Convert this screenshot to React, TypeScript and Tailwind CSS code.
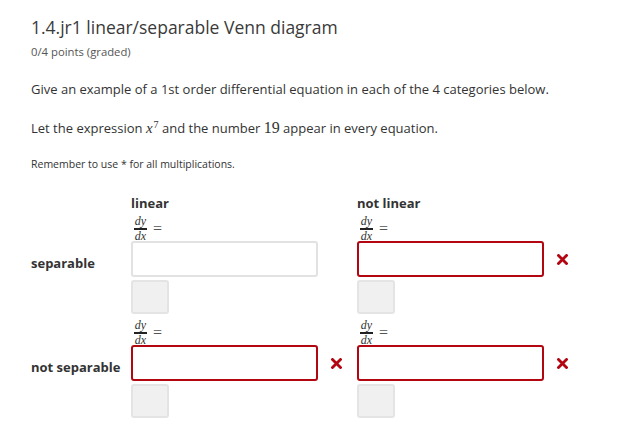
import React from 'react';

const RED = '#b20610';

function Frac() {
  return (
    <div className="flex h-[29px] items-center pl-[3px] pt-[4px]">
      <div className="flex flex-col items-center [font-family:'Liberation_Serif',serif] text-[12px] italic leading-[11px] text-[#333]">
        <span>dy</span>
        <span className="my-[1px] h-[2px] w-[13px] bg-[#222]" />
        <span>dx</span>
      </div>
      <span className="ml-[6px] [font-family:'Liberation_Serif',serif] text-[16px] leading-none text-[#555]">=</span>
    </div>
  );
}

function Cross() {
  return (
    <svg width="11" height="11" viewBox="0 0 11 11" className="block">
      <path d="M1.5 1.5 L9.5 9.5 M9.5 1.5 L1.5 9.5" stroke={RED} strokeWidth="2.8" strokeLinecap="square" />
    </svg>
  );
}

function Field({ wrong }: { wrong?: boolean }) {
  return (
    <div className="flex items-center">
      <div
        className={
          wrong
            ? 'h-[36px] w-[187px] rounded-[3px] border-2 border-[#b20610] bg-white'
            : 'h-[36px] w-[187px] rounded-[3px] border-2 border-[#e2e2e2] bg-white'
        }
      />
      {wrong && (
        <div className="ml-[13px]">
          <Cross />
        </div>
      )}
    </div>
  );
}

function Box() {
  return <div className="mt-[3px] h-[34px] w-[38px] rounded-[3px] border-2 border-[#e4e4e4] bg-[#f0f0f0]" />;
}

function Row({ label, wrong }: { label: string; wrong: [boolean, boolean] }) {
  return (
    <div className="grid grid-cols-[100px_226px_1fr] pb-[2px]">
      <div />
      <Frac />
      <Frac />
      <div className="self-center pt-[9px] text-[13px] font-bold text-[#333]">{label}</div>
      <Field wrong={wrong[0]} />
      <Field wrong={wrong[1]} />
      <div />
      <Box />
      <Box />
    </div>
  );
}

export default function App() {
  return (
    <div className="min-h-screen bg-white px-[31px] pt-[15px] [font-family:'Open_Sans',sans-serif] text-[#333]">
      <h1 className="text-[17.5px] leading-[24px] text-[#3a3a3a]">1.4.jr1 linear/separable Venn diagram</h1>
      <div className="mt-[5px] text-[11.3px] leading-[16px] text-[#555]">0/4 points (graded)</div>

      <p className="mt-[19px] text-[13px] leading-[20px]">
        Give an example of a 1st order differential equation in each of the 4 categories below.
      </p>
      <p className="mt-[18px] text-[13px] leading-[22px]">
        Let the expression{' '}
        <span className="[font-family:'Liberation_Serif',serif] text-[15px] italic">
          x<sup className="ml-[1px] text-[10px] not-italic">7</sup>
        </span>{' '}
        and the number <span className="[font-family:'Liberation_Serif',serif] text-[16px]">19</span> appear in every equation.
      </p>
      <p className="mt-[18px] text-[10.5px] leading-[14px]">Remember to use * for all multiplications.</p>

      <div className="mt-[23px] grid grid-cols-[100px_226px_1fr] text-[13px] font-bold leading-[18px]">
        <div />
        <div>linear</div>
        <div>not linear</div>
      </div>
      <Row label="separable" wrong={[false, true]} />
      <Row label="not separable" wrong={[true, true]} />
    </div>
  );
}
